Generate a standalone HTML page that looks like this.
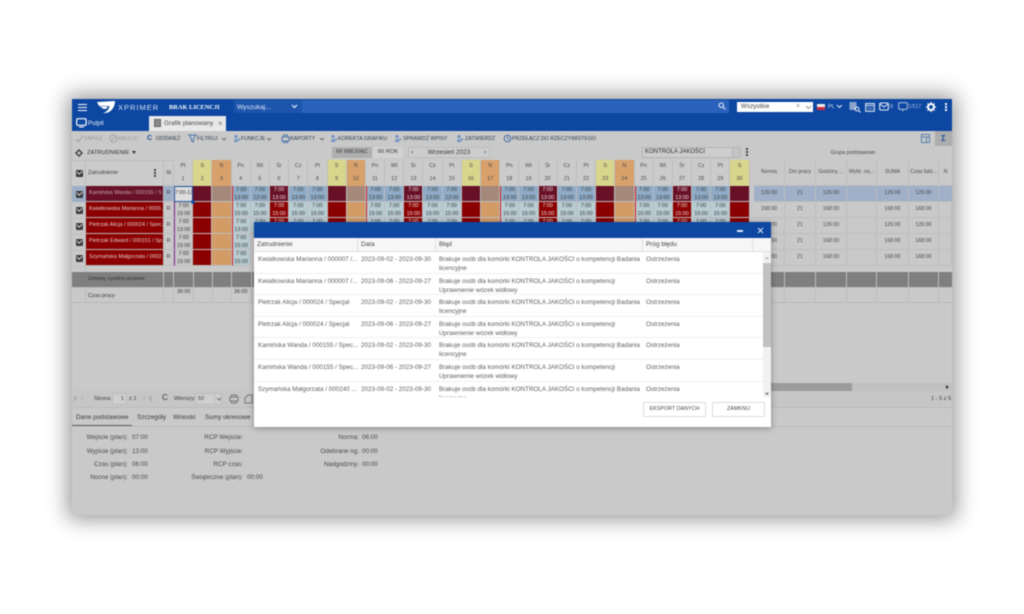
<!DOCTYPE html>
<html lang="pl"><head><meta charset="utf-8"><title>Grafik planowany</title>
<style>
html,body{margin:0;padding:0;background:#fff;width:1024px;height:614px;overflow:hidden}
*{box-sizing:border-box}
body{font-family:"Liberation Sans",sans-serif}
#app{position:absolute;left:72px;top:99px;width:880px;height:416px;background:#c9c9c9;box-shadow:0 0 20px 4px rgba(0,0,0,.42)}
#wrap{position:absolute;left:0;top:0;width:1024px;height:614px;filter:blur(.5px)}
.a{position:absolute;white-space:nowrap}
.t{position:absolute;white-space:nowrap;font-size:6.3px;color:#3a3a3a;line-height:8px}
.tb{position:absolute;white-space:nowrap;font-size:5.25px;color:#2e3c4a;line-height:8px;top:135px}
.g{color:#999}
.r{position:absolute;left:174px;display:flex;height:16px}
.r i{display:block;flex:0 0 19.2px;width:19.2px;height:16px;font-style:normal;font-size:5.4px;line-height:8px;text-align:center;padding-top:0;border-right:1px solid #bdbdbd;border-bottom:1px solid #bdbdbd;color:#3a3a3a;background:#b8ccd3;white-space:nowrap;overflow:hidden}
.r i.w{background:#8b0000;color:#eee2e2}
.r i.s{background:#8b0000}
.r i.n{background:#d39c66}
.r i.m{border-left:1.5px solid #d21c1c}
.r i.f{background:#c8c8c8;border-left:1.5px solid #7d1f96}
.r1 i{background:#8fabc6}
.r1 i.w,.r1 i.s{background:#671026}
.r1 i.n{background:#a4897a}
.r1 i.f{background:#dedede;border:1.5px solid #1d4f9c;font-size:5.4px;line-height:12px;padding:0}
.h{position:absolute;top:160px;left:174px;display:flex;height:26px}
.h b{display:block;flex:0 0 19.2px;height:26px;font-weight:normal;font-size:5.4px;text-align:center;line-height:13px;color:#4a4a4a;border-right:1px solid #bdbdbd;background:#cbcbcb;padding-top:0}
.h b.s{background:#d8d58c}
.h b.n{background:#d8a16b}
.nm{position:absolute;left:86px;width:77px;height:16px;background:#8b0000;color:#e4caca;font-size:5.4px;line-height:15px;padding-left:3px;white-space:nowrap;overflow:hidden;border-bottom:1px solid #b5b5b5}
.ck{position:absolute;left:75.500px;width:7px;height:7px;background:#3a3a3a;border-radius:1px}
.ck:after{content:"";position:absolute;left:1.500px;top:.8px;width:3.500px;height:2.500px;border-left:1px solid #ddd;border-bottom:1px solid #ddd;transform:rotate(-45deg)}
.st{position:absolute;left:163px;width:11px;height:16px;font-size:5.2px;line-height:15px;text-align:center;color:#3a3a3a;border-bottom:1px solid #bdbdbd;border-left:1px solid #bdbdbd;border-right:1px solid #bdbdbd}
.rr{position:absolute;left:754px;width:198px;height:16px;display:flex;border-bottom:1px solid #bdbdbd}
.rr u{display:block;text-decoration:none;height:100%;font-size:5.3px;line-height:15px;text-align:center;color:#4a4a4a;border-right:1px solid #bdbdbd}
.c1{width:31px}.c2{width:31px}.c3{width:31px}.c4{width:30px}.c5{width:32px}.c6{width:30px}.c7{width:13px}
#modal{position:absolute;left:254px;top:222px;width:517px;height:205px;background:#fff;box-shadow:0 1px 6px rgba(0,0,0,.35)}
#mh{position:absolute;left:0;top:0;width:517px;height:16px;background:#0d47a1}
#mc{position:absolute;left:0;top:16px;width:517px;height:14px;background:#f6f6f6;border-bottom:1px solid #e2e2e2}
#mc span{position:absolute;top:0;font-size:6.4px;line-height:14px;color:#4a4a4a;height:13px;padding-left:3px;border-right:1px solid #e0e0e0}
.mr{position:absolute;left:0;width:509px;height:21.6px;border-bottom:1px solid #efefef}
.mr span{position:absolute;top:3px;font-size:6.3px;line-height:9px;color:#606060;white-space:nowrap}
.btn{position:absolute;top:180px;height:15px;background:#fff;border:1px solid #ddd;border-radius:1px;font-size:5.4px;line-height:13px;color:#4a4a4a;text-align:center}
.d{position:absolute;font-size:6.3px;line-height:8px;color:#4a4a4a;white-space:nowrap}
.l{text-align:right}
</style></head><body>
<div id="wrap">
<div id="app"></div>

<!-- top bar -->
<div class="a" style="left:72px;top:99px;width:880px;height:32px;background:#0d47a1"></div>
<div class="a" style="left:234px;top:100px;width:495px;height:13px;background:#2a62bb"></div>
<div class="a" style="left:234px;top:100px;width:68px;height:13px;background:#1d55ad"></div>
<div class="a" style="left:78px;top:104px;width:9px;height:1.4px;background:#fff;box-shadow:0 3px 0 #fff,0 6px 0 #fff"></div>
<svg class="a" style="left:96px;top:100px" width="20" height="14" viewBox="0 0 20 14"><path d="M1 2 L19 1 C19 7 15 13 9 13 L7 13 C11 12 13 9 13.500 6 L3 6 Z" fill="#fff"/><path d="M4 6.500 L12 6.500 L10 9 L7 8.800Z" fill="#fff"/></svg>
<div class="a" style="left:118px;top:103px;color:#d6e0f0;font-size:7.5px;letter-spacing:1px;line-height:9px">XPRIMER</div>
<div class="a" style="left:169px;top:103px;color:#fff;font:bold 6.4px/9px 'Liberation Serif',serif">BRAK LICENCJI</div>
<div class="a" style="left:237px;top:104px;color:#e6ecf6;font-size:6.6px;line-height:8px">Wyszukaj...</div>
<svg class="a" style="left:291px;top:104px" width="7" height="5"><path d="M1 1l2.500 2.500L6 1" stroke="#fff" fill="none"/></svg>
<svg class="a" style="left:718px;top:102px" width="8" height="8"><circle cx="3.200" cy="3.200" r="2.200" stroke="#dfe7f4" fill="none" stroke-width="1.100"/><path d="M5 5l2.300 2.300" stroke="#dfe7f4" stroke-width="1.200"/></svg>
<div class="a" style="left:737px;top:102px;width:76px;height:10px;background:#fff"></div>
<div class="a" style="left:741px;top:103px;font-size:6.3px;line-height:8px;color:#444">Wszystkie</div>
<div class="a" style="left:796px;top:103px;font-size:7px;line-height:8px;color:#888">×</div>
<svg class="a" style="left:805px;top:105px" width="7" height="5"><path d="M1 1l2.500 2.500L6 1" stroke="#999" fill="none"/></svg>
<div class="a" style="left:817px;top:104px;width:8px;height:3px;background:#eee"></div>
<div class="a" style="left:817px;top:107px;width:8px;height:3px;background:#d22a3a"></div>
<div class="a" style="left:828px;top:104px;font-size:5.5px;line-height:7px;color:#d5dff0">PL</div>
<svg class="a" style="left:836px;top:104px" width="7" height="5"><path d="M1 1l2.500 2.500L6 1" stroke="#dfe7f4" fill="none"/></svg>
<svg class="a" style="left:849px;top:101px" width="12" height="12"><rect x=".5" y="1" width="7" height="8" fill="#8aa4cc"/><circle cx="8" cy="8" r="2" fill="none" stroke="#dde6f3"/><path d="M9.500 9.500l2 2" stroke="#dde6f3"/></svg>
<svg class="a" style="left:865px;top:102px" width="10" height="10"><rect x=".7" y="1.500" width="8.600" height="7.800" fill="none" stroke="#d8e2f2" stroke-width="1.100"/><path d="M.7 3.500h8.600" stroke="#d8e2f2"/><path d="M3 5v3M5 5v3M7 5v3" stroke="#a9bede" stroke-width=".7"/></svg>
<svg class="a" style="left:879px;top:102px" width="10" height="9"><rect x=".7" y="1" width="8.600" height="7" rx="1" fill="none" stroke="#e3eaf5" stroke-width="1.100"/><path d="M1 2l4 3 4-3" stroke="#e3eaf5" fill="none" stroke-width=".9"/></svg>
<div class="a" style="left:890px;top:104px;font-size:5.3px;line-height:7px;color:#c8d5ea">0</div>
<svg class="a" style="left:898px;top:102px" width="10" height="10"><rect x=".7" y=".7" width="8.600" height="6.600" rx="1" fill="none" stroke="#9fb6da" stroke-width="1.100"/><path d="M5 7.500v2" stroke="#9fb6da"/></svg>
<div class="a" style="left:908px;top:104px;font-size:5.3px;line-height:7px;color:#a9bede">1/517</div>
<svg class="a" style="left:926px;top:102px" width="10" height="10" viewBox="0 0 10 10"><circle cx="5" cy="5" r="2.900" fill="none" stroke="#fff" stroke-width="1.900"/><path d="M5 0v2M5 8v2M0 5h2M8 5h2M1.500 1.500l1.300 1.300M7.200 7.200l1.300 1.300M8.500 1.500L7.200 2.800M2.800 7.200L1.500 8.500" stroke="#fff" stroke-width="1.300"/></svg>
<div class="a" style="left:945px;top:103px;width:2px;height:2px;background:#fff;box-shadow:0 3px 0 #fff,0 6px 0 #fff"></div>

<!-- tabs -->
<svg class="a" style="left:76px;top:118px" width="11" height="10"><rect x=".7" y=".7" width="9.400" height="6.600" rx="1" fill="none" stroke="#fff" stroke-width="1.200"/><path d="M3 9h5" stroke="#fff"/></svg>
<div class="a" style="left:88px;top:120px;font-size:6.3px;line-height:8px;color:#e6ecf6">Pulpit</div>
<div class="a" style="left:149px;top:116px;width:77px;height:15px;background:#e8e8e8"></div>
<div class="a" style="left:154px;top:119px;width:7px;height:8px;background:#8a8a8a;border:1px solid #666"></div>
<div class="a" style="left:164px;top:120px;font-size:6.4px;line-height:8px;color:#4a4a4a">Grafik planowany</div>
<div class="a" style="left:218px;top:119px;font-size:8px;line-height:10px;color:#777">×</div>

<!-- toolbar -->
<svg class="a" style="left:75px;top:134px" width="9" height="9"><path d="M1 5l2.500 2.500L8 1.500" stroke="#a5a5a5" fill="none" stroke-width="1.200"/></svg>
<div class="tb g" style="left:84px">ZAPISZ</div>
<svg class="a" style="left:109px;top:134px" width="9" height="9"><circle cx="4.500" cy="4.500" r="3.500" stroke="#a5a5a5" fill="none"/><path d="M2 7l5-5" stroke="#a5a5a5"/></svg>
<div class="tb g" style="left:118px">ANULUJ</div>
<div class="tb" style="left:147px;color:#1d4f9c;font-weight:bold;font-size:7px">C</div>
<div class="tb" style="left:156px">ODŚWIEŻ</div>
<svg class="a" style="left:188px;top:134px" width="9" height="9"><path d="M.7 1h7.600L5.500 4.500V8L3.500 7V4.500Z" stroke="#4f74a8" fill="none"/></svg>
<div class="tb" style="left:197px">FILTRUJ</div>
<svg class="a" style="left:221px;top:137px" width="6" height="4"><path d="M1 1l2 2 2-2" stroke="#555" fill="none" stroke-width=".8"/></svg>
<svg class="a" style="left:233px;top:134px" width="8" height="9"><circle cx="3" cy="2.500" r="1.600" fill="#6f92c0"/><path d="M1 8c0-4 4-4 4 0Z" fill="#6f92c0"/><circle cx="6" cy="5.500" r="1.200" fill="#6f92c0"/></svg>
<div class="tb" style="left:241px">FUNKCJE</div>
<svg class="a" style="left:266px;top:137px" width="6" height="4"><path d="M1 1l2 2 2-2" stroke="#555" fill="none" stroke-width=".8"/></svg>
<svg class="a" style="left:281px;top:134px" width="9" height="9"><rect x="1" y="3" width="7" height="4" fill="none" stroke="#4f74a8"/><path d="M2.500 3V1h4v2M2.500 7v1.500h4V7" stroke="#4f74a8" fill="none"/></svg>
<div class="tb" style="left:290px">RAPORTY</div>
<svg class="a" style="left:319px;top:137px" width="6" height="4"><path d="M1 1l2 2 2-2" stroke="#555" fill="none" stroke-width=".8"/></svg>
<svg class="a" style="left:330px;top:134px" width="8" height="9"><circle cx="3" cy="2.500" r="1.600" fill="#6f92c0"/><path d="M1 8c0-4 4-4 4 0Z" fill="#6f92c0"/><circle cx="6" cy="5.500" r="1.200" fill="#6f92c0"/></svg>
<div class="tb" style="left:338px">KOREKTA GRAFIKU</div>
<svg class="a" style="left:394px;top:134px" width="8" height="9"><circle cx="3" cy="2.500" r="1.600" fill="#6f92c0"/><path d="M1 8c0-4 4-4 4 0Z" fill="#6f92c0"/><circle cx="6" cy="5.500" r="1.200" fill="#6f92c0"/></svg>
<div class="tb" style="left:403px">SPRAWDŹ WPISY</div>
<svg class="a" style="left:456px;top:134px" width="8" height="9"><circle cx="3" cy="2.500" r="1.600" fill="#6f92c0"/><path d="M1 8c0-4 4-4 4 0Z" fill="#6f92c0"/><circle cx="6" cy="5.500" r="1.200" fill="#6f92c0"/></svg>
<div class="tb" style="left:465px">ZATWIERDŹ</div>
<svg class="a" style="left:503px;top:134px" width="9" height="9"><circle cx="4.500" cy="4.500" r="3.300" stroke="#3f6aa5" fill="none"/><path d="M4.500 2.500v2l1.500 1" stroke="#3f6aa5" fill="none" stroke-width=".8"/></svg>
<div class="tb" style="left:512px">PRZEŁĄCZ DO RZECZYWISTEGO</div>
<svg class="a" style="left:921px;top:134px" width="9" height="9"><rect x=".5" y=".5" width="8" height="8" fill="none" stroke="#5c80ad"/><path d="M.5 3h8M5.500 3v5.500" stroke="#5c80ad"/></svg>
<div class="a" style="left:935px;top:131px;width:17px;height:15px;background:#adadad;color:#1d4f9c;font-size:8px;line-height:15px;text-align:center;font-weight:bold">Σ</div>

<!-- second row -->
<svg class="a" style="left:75px;top:149px" width="8" height="8" viewBox="0 0 10 10"><circle cx="5" cy="5" r="2.900" fill="none" stroke="#444" stroke-width="1.900"/><path d="M5 0v2M5 8v2M0 5h2M8 5h2" stroke="#444" stroke-width="1.300"/></svg>
<div class="t" style="left:87px;top:149px;font-size:5.800px;color:#333">ZATRUDNIENIE</div>
<div class="a" style="left:132px;top:151px;border:2.500px solid transparent;border-top:3px solid #333"></div>
<div class="a" style="left:332px;top:147px;width:40px;height:11px;background:#afafaf;font-size:5.800px;line-height:11px;color:#3a3a3a;text-align:center">IIII MIESIĄC</div>
<div class="a" style="left:373px;top:147px;width:30px;height:11px;background:#d2d2d2;font-size:5.800px;line-height:11px;color:#3a3a3a;text-align:center">IIII ROK</div>
<div class="a" style="left:408px;top:147px;width:82px;height:11px;background:#cdcdcd;border:1px solid #bdbdbd;font-size:6.4px;line-height:9px;color:#3a3a3a;text-align:center">Wrzesień 2023</div>
<div class="a" style="left:411px;top:148px;font-size:7px;line-height:9px;color:#444">‹</div>
<div class="a" style="left:484px;top:148px;font-size:7px;line-height:9px;color:#444">›</div>
<div class="a" style="left:642px;top:147px;width:99px;height:11px;background:#cdcdcd;border:1px solid #b5b5b5;font-size:6px;line-height:9px;color:#333;padding-left:2px">KONTROLA JAKOŚCI</div>
<div class="a" style="left:732px;top:147px;width:9px;height:11px;background:#c4c4c4;border:1px solid #b5b5b5"></div>
<div class="a" style="left:745.500px;top:148px;width:2px;height:2px;background:#444;box-shadow:0 3px 0 #444,0 6px 0 #444"></div>
<div class="a" style="left:754px;top:149px;width:198px;text-align:center;font-size:5.2px;line-height:8px;color:#4a4a4a">Grupa podstawowe</div>

<!-- grid left header -->
<div class="a" style="left:72px;top:160px;width:102px;height:26px;background:#cbcbcb;border-top:1px solid #bdbdbd"></div>
<div class="ck" style="top:169.500px"></div>
<div class="a" style="left:85px;top:160px;width:1px;height:143px;background:#bdbdbd"></div>
<div class="t" style="left:88px;top:169px;font-size:5.4px">Zatrudnienie</div>
<div class="a" style="left:153.500px;top:169px;width:2px;height:2px;background:#444;box-shadow:0 3px 0 #444,0 6px 0 #444"></div>
<div class="st" style="top:160px;height:26px;line-height:26px">St</div>

<div class="h">
<b>Pt<br>1</b><b class="s">S<br>2</b><b class="n">N<br>3</b><b>Pn<br>4</b><b>Wt<br>5</b><b>Śr<br>6</b><b>Cz<br>7</b><b>Pt<br>8</b><b class="s">S<br>9</b><b class="n">N<br>10</b><b>Pn<br>11</b><b>Wt<br>12</b><b>Śr<br>13</b><b>Cz<br>14</b><b>Pt<br>15</b><b class="s">S<br>16</b><b class="n">N<br>17</b><b>Pn<br>18</b><b>Wt<br>19</b><b>Śr<br>20</b><b>Cz<br>21</b><b>Pt<br>22</b><b class="s">S<br>23</b><b class="n">N<br>24</b><b>Pn<br>25</b><b>Wt<br>26</b><b>Śr<br>27</b><b>Cz<br>28</b><b>Pt<br>29</b><b class="s">S<br>30</b>
</div>

<!-- left rows -->
<div class="a" style="left:72px;top:186px;width:14px;height:16px;background:#9db0c8"></div>
<div class="ck" style="top:190.500px"></div><div class="ck" style="top:206.500px"></div><div class="ck" style="top:222.500px"></div><div class="ck" style="top:238.500px"></div><div class="ck" style="top:254.500px"></div>
<div class="a" style="left:72px;top:218px;width:14px;height:1px;background:#bdbdbd"></div>
<div class="a" style="left:72px;top:234px;width:14px;height:1px;background:#bdbdbd"></div>
<div class="a" style="left:72px;top:250px;width:14px;height:1px;background:#bdbdbd"></div>
<div class="a" style="left:72px;top:266px;width:14px;height:1px;background:#bdbdbd"></div>
<div class="nm" style="top:186px;background:#671026;color:#c9aab3">Kamińska Wanda / 000155 / S...</div>
<div class="nm" style="top:202px">Kwiatkowska Marianna / 0000...</div>
<div class="nm" style="top:218px">Pietrzak Alicja / 000024 / Spec...</div>
<div class="nm" style="top:234px">Pietrzak Edward / 000151 / Sp...</div>
<div class="nm" style="top:250px">Szymańska Małgorzata / 0002...</div>
<div class="st" style="top:186px;background:#9db0c8">R</div>
<div class="st" style="top:202px">R</div>
<div class="st" style="top:218px">R</div>
<div class="st" style="top:234px">R</div>
<div class="st" style="top:250px">R</div>

<!-- day rows -->
<div class="r r1" style="top:186px"><i class="f">7:00-13</i><i class="s"></i><i class="n"></i><i class="m">7:00<br>13:00</i><i>7:00<br>13:00</i><i class="w">7:00<br>13:00</i><i>7:00<br>13:00</i><i>7:00<br>13:00</i><i class="s"></i><i class="n"></i><i class="m">7:00<br>13:00</i><i>7:00<br>13:00</i><i class="w">7:00<br>13:00</i><i>7:00<br>13:00</i><i>7:00<br>13:00</i><i class="s"></i><i class="n"></i><i class="m">7:00<br>13:00</i><i>7:00<br>13:00</i><i class="w">7:00<br>13:00</i><i>7:00<br>13:00</i><i>7:00<br>13:00</i><i class="s"></i><i class="n"></i><i class="m">7:00<br>13:00</i><i>7:00<br>13:00</i><i class="w">7:00<br>13:00</i><i>7:00<br>13:00</i><i>7:00<br>13:00</i><i class="s"></i></div>
<div class="a" style="left:190.500px;top:200px;width:4px;height:4px;background:#1d4f9c;border-radius:50%;z-index:2"></div>
<div class="r" style="top:202px"><i class="f">7:00<br>15:00</i><i class="s"></i><i class="n"></i><i class="m">7:00<br>15:00</i><i>7:00<br>15:00</i><i class="w">7:00<br>15:00</i><i>7:00<br>15:00</i><i>7:00<br>15:00</i><i class="s"></i><i class="n"></i><i class="m">7:00<br>15:00</i><i>7:00<br>15:00</i><i class="w">7:00<br>15:00</i><i>7:00<br>15:00</i><i>7:00<br>15:00</i><i class="s"></i><i class="n"></i><i class="m">7:00<br>15:00</i><i>7:00<br>15:00</i><i class="w">7:00<br>15:00</i><i>7:00<br>15:00</i><i>7:00<br>15:00</i><i class="s"></i><i class="n"></i><i class="m">7:00<br>15:00</i><i>7:00<br>15:00</i><i class="w">7:00<br>15:00</i><i>7:00<br>15:00</i><i>7:00<br>15:00</i><i class="s"></i></div>
<div class="r" style="top:218px"><i class="f">7:00<br>13:00</i><i class="s"></i><i class="n"></i><i class="m">7:00<br>13:00</i><i>7:00<br>13:00</i><i class="w">7:00<br>13:00</i><i>7:00<br>13:00</i><i>7:00<br>13:00</i><i class="s"></i><i class="n"></i><i class="m">7:00<br>13:00</i><i>7:00<br>13:00</i><i class="w">7:00<br>13:00</i><i>7:00<br>13:00</i><i>7:00<br>13:00</i><i class="s"></i><i class="n"></i><i class="m">7:00<br>13:00</i><i>7:00<br>13:00</i><i class="w">7:00<br>13:00</i><i>7:00<br>13:00</i><i>7:00<br>13:00</i><i class="s"></i><i class="n"></i><i class="m">7:00<br>13:00</i><i>7:00<br>13:00</i><i class="w">7:00<br>13:00</i><i>7:00<br>13:00</i><i>7:00<br>13:00</i><i class="s"></i></div>
<div class="r" style="top:234px"><i class="f">7:00<br>15:00</i><i class="s"></i><i class="n"></i><i class="m">7:00<br>15:00</i></div>
<div class="r" style="top:250px"><i class="f">7:00<br>15:00</i><i class="s"></i><i class="n"></i><i class="m">7:00<br>15:00</i></div>

<!-- dark row + czas pracy -->
<div class="a" style="left:72px;top:272px;width:880px;height:15px;background:#7f7f7f"></div>
<div class="t" style="left:88px;top:275px;font-size:5.4px;color:#333">Umowy cywilno-prawne</div>
<div class="a" style="left:72px;top:287px;width:880px;height:16px;border-top:1px solid #bdbdbd;border-bottom:1px solid #b8b8b8"></div>
<div class="t" style="left:88px;top:292px;font-size:5.4px">Czas pracy</div>
<div class="t" style="left:177px;top:288px;font-size:5.4px">36:00</div>
<div class="t" style="left:234px;top:288px;font-size:5.4px">36:00</div>
<div class="a" style="left:163px;top:272px;width:1px;height:31px;background:#bdbdbd"></div>
<div class="a" style="left:173px;top:272px;width:1px;height:31px;background:#bdbdbd"></div>
<div class="a" style="left:193px;top:272px;width:1px;height:31px;background:#bdbdbd"></div>
<div class="a" style="left:212px;top:272px;width:1px;height:31px;background:#bdbdbd"></div>
<div class="a" style="left:231px;top:272px;width:1px;height:31px;background:#bdbdbd"></div>
<div class="a" style="left:251px;top:272px;width:1px;height:31px;background:#bdbdbd"></div>

<!-- right table -->
<div class="rr" style="top:160px;height:26px"><u class="c1" style="line-height:25px">Norma</u><u class="c2" style="line-height:25px">Dni pracy</u><u class="c3" style="line-height:25px">Godziny ...</u><u class="c4" style="line-height:25px">Wybr. na...</u><u class="c5" style="line-height:25px">SUMA</u><u class="c6" style="line-height:25px">Czas fakt...</u><u class="c7" style="line-height:25px;border:0">N</u></div>
<div class="rr" style="top:186px;background:#9fb0c8"><u class="c1">126:00</u><u class="c2">21</u><u class="c3">126:00</u><u class="c4"></u><u class="c5">126:00</u><u class="c6">126:00</u></div>
<div class="rr" style="top:202px"><u class="c1">168:00</u><u class="c2">21</u><u class="c3">168:00</u><u class="c4"></u><u class="c5">168:00</u><u class="c6">168:00</u><u class="c7"></u></div>
<div class="rr" style="top:218px"><u class="c1">126:00</u><u class="c2">21</u><u class="c3">126:00</u><u class="c4"></u><u class="c5">126:00</u><u class="c6">126:00</u><u class="c7"></u></div>
<div class="rr" style="top:234px"><u class="c1">168:00</u><u class="c2">21</u><u class="c3">168:00</u><u class="c4"></u><u class="c5">168:00</u><u class="c6">168:00</u><u class="c7"></u></div>
<div class="rr" style="top:250px"><u class="c1">168:00</u><u class="c2">21</u><u class="c3">168:00</u><u class="c4"></u><u class="c5">168:00</u><u class="c6">168:00</u><u class="c7"></u></div>
<div class="rr" style="top:272px;height:15px;border:0"><u class="c1"></u><u class="c2"></u><u class="c3"></u><u class="c4"></u><u class="c5"></u><u class="c6"></u></div>
<div class="rr" style="top:287px;border:0"><u class="c1"></u><u class="c2"></u><u class="c3"></u><u class="c4"></u><u class="c5"></u><u class="c6"></u></div>

<!-- scrollbar + pager -->
<div class="a" style="left:254px;top:383px;width:698px;height:8px;background:#c1c1c1"></div>
<div class="a" style="left:254px;top:383px;width:598px;height:8px;background:#9c9c9c"></div>
<div class="a" style="left:946px;top:385px;border:2.500px solid transparent;border-left:3px solid #333"></div>
<div class="a" style="left:72px;top:391px;width:880px;height:17px;background:#c6c6c6;border-bottom:1px solid #bbb"></div>
<div class="t" style="left:74px;top:395px;color:#888;font-size:6px">|‹ &nbsp;‹</div>
<div class="t" style="left:94px;top:395px;font-size:5.6px">Strona</div>
<div class="a" style="left:112px;top:393px;width:15px;height:12px;background:#cfcfcf;border:1px solid #bbb;font-size:5.6px;line-height:11px;text-align:right;padding-right:2px;color:#444">1</div>
<div class="t" style="left:129px;top:395px;font-size:5.6px">z 1</div>
<div class="t" style="left:143px;top:395px;color:#888;font-size:6px">› &nbsp;›|</div>
<div class="t" style="left:162px;top:394px;font-size:8px;color:#333">C</div>
<div class="t" style="left:174px;top:395px;font-size:5.6px">Wierszy:</div>
<div class="a" style="left:195px;top:393px;width:27px;height:12px;background:#cfcfcf;border:1px solid #bbb;font-size:5.6px;line-height:10px;padding-left:2px;color:#444">50</div>
<div class="a" style="left:214px;top:393px;width:8px;height:12px;border-left:1px solid #bbb"></div>
<svg class="a" style="left:215.500px;top:397px" width="6" height="4"><path d="M1 1l2 2 2-2" stroke="#555" fill="none" stroke-width=".8"/></svg>
<svg class="a" style="left:229px;top:394px" width="10" height="10"><rect x="1" y="3" width="8" height="4" fill="none" stroke="#777"/><path d="M2.500 3V1h5v2M2.500 7v2h5V7" stroke="#777" fill="none"/></svg>
<svg class="a" style="left:244px;top:394px" width="9" height="10"><path d="M1 4l3-3h4v8H1Z" fill="none" stroke="#777"/></svg>
<div class="t" style="left:931px;top:395px;font-size:5.6px">1 - 5 z 5</div>

<!-- tabs bottom -->
<div class="t" style="left:76px;top:414px;font-size:6.4px;color:#3a3a3a">Dane podstawowe</div>
<div class="a" style="left:72px;top:425px;width:60px;height:1px;background:#555"></div>
<div class="a" style="left:132px;top:425.500px;width:820px;height:1px;background:#bbb"></div>
<div class="t" style="left:137px;top:414px;font-size:6.4px">Szczegóły</div>
<div class="t" style="left:173px;top:414px;font-size:6.4px">Wnioski</div>
<div class="t" style="left:205px;top:414px;font-size:6.4px">Sumy okresowe</div>

<!-- details -->
<div class="d l" style="left:60px;width:68px;top:434px">Wejście (plan):</div><div class="d" style="left:132px;top:434px">07:00</div>
<div class="d l" style="left:60px;width:68px;top:448px">Wyjście (plan):</div><div class="d" style="left:132px;top:448px">13:00</div>
<div class="d l" style="left:60px;width:68px;top:461px">Czas (plan):</div><div class="d" style="left:132px;top:461px">06:00</div>
<div class="d l" style="left:60px;width:68px;top:474px">Nocne (plan):</div><div class="d" style="left:132px;top:474px">00:00</div>
<div class="d l" style="left:170px;width:73px;top:434px">RCP Wejście:</div>
<div class="d l" style="left:170px;width:73px;top:448px">RCP Wyjście:</div>
<div class="d l" style="left:170px;width:73px;top:461px">RCP czas:</div>
<div class="d l" style="left:170px;width:73px;top:474px">Świąteczne (plan):</div><div class="d" style="left:247px;top:474px">00:00</div>
<div class="d l" style="left:300px;width:59px;top:434px">Norma:</div><div class="d" style="left:362px;top:434px">06:00</div>
<div class="d l" style="left:300px;width:59px;top:448px">Odebrane ng:</div><div class="d" style="left:362px;top:448px">00:00</div>
<div class="d l" style="left:300px;width:59px;top:461px">Nadgodziny:</div><div class="d" style="left:362px;top:461px">00:00</div>

<!-- modal -->
<div id="modal">
<div id="mh"></div>
<div class="a" style="left:483px;top:8px;width:6px;height:1.500px;background:#e6ecf6"></div>
<svg class="a" style="left:503px;top:5px" width="7" height="7"><path d="M1 1l5 5M6 1l-5 5" stroke="#e6ecf6" stroke-width=".9"/></svg>
<div id="mc">
<span style="left:0;width:104px">Zatrudnienie</span>
<span style="left:104px;width:78px">Data</span>
<span style="left:182px;width:207px">Błąd</span>
<span style="left:389px;width:110px">Próg błędu</span>
</div>
<div class="a" style="left:0;top:30px;width:509px;height:145px;overflow:hidden">
<div class="mr" style="top:0"><span style="left:4px">Kwiatkowska Marianna / 000007 /...</span><span style="left:107px">2023-09-02 - 2023-09-30</span><span style="left:185px">Brakuje osób dla komórki KONTROLA JAKOŚCI o kompetencji Badania<br>licencyjne</span><span style="left:392px">Ostrzeżenia</span></div>
<div class="mr" style="top:21.600px"><span style="left:4px">Kwiatkowska Marianna / 000007 /...</span><span style="left:107px">2023-09-06 - 2023-09-27</span><span style="left:185px">Brakuje osób dla komórki KONTROLA JAKOŚCI o kompetencji<br>Uprawnienie wózek widłowy</span><span style="left:392px">Ostrzeżenia</span></div>
<div class="mr" style="top:43.200px"><span style="left:4px">Pietrzak Alicja / 000024 / Specjal</span><span style="left:107px">2023-09-02 - 2023-09-30</span><span style="left:185px">Brakuje osób dla komórki KONTROLA JAKOŚCI o kompetencji Badania<br>licencyjne</span><span style="left:392px">Ostrzeżenia</span></div>
<div class="mr" style="top:64.800px"><span style="left:4px">Pietrzak Alicja / 000024 / Specjal</span><span style="left:107px">2023-09-06 - 2023-09-27</span><span style="left:185px">Brakuje osób dla komórki KONTROLA JAKOŚCI o kompetencji<br>Uprawnienie wózek widłowy</span><span style="left:392px">Ostrzeżenia</span></div>
<div class="mr" style="top:86.400px"><span style="left:4px">Kamińska Wanda / 000155 / Spec...</span><span style="left:107px">2023-09-02 - 2023-09-30</span><span style="left:185px">Brakuje osób dla komórki KONTROLA JAKOŚCI o kompetencji Badania<br>licencyjne</span><span style="left:392px">Ostrzeżenia</span></div>
<div class="mr" style="top:108px"><span style="left:4px">Kamińska Wanda / 000155 / Spec...</span><span style="left:107px">2023-09-06 - 2023-09-27</span><span style="left:185px">Brakuje osób dla komórki KONTROLA JAKOŚCI o kompetencji<br>Uprawnienie wózek widłowy</span><span style="left:392px">Ostrzeżenia</span></div>
<div class="mr" style="top:129.600px"><span style="left:4px">Szymańska Małgorzata / 000240 ...</span><span style="left:107px">2023-09-02 - 2023-09-30</span><span style="left:185px">Brakuje osób dla komórki KONTROLA JAKOŚCI o kompetencji Badania<br>licencyjne</span><span style="left:392px">Ostrzeżenia</span></div>
</div>
<div class="a" style="left:509px;top:30px;width:8px;height:145px;background:#f1f1f1"></div>
<div class="a" style="left:509px;top:41px;width:8px;height:84px;background:#c1c1c1"></div>
<div class="a" style="left:511px;top:33px;border:2px solid transparent;border-bottom:2.500px solid #aaa"></div>
<div class="a" style="left:511px;top:171px;border:2px solid transparent;border-top:2.500px solid #555"></div>
<div class="btn" style="left:389px;width:63px">EKSPORT DANYCH</div>
<div class="btn" style="left:458px;width:53px">ZAMKNIJ</div>
</div>
</div>
</body></html>
